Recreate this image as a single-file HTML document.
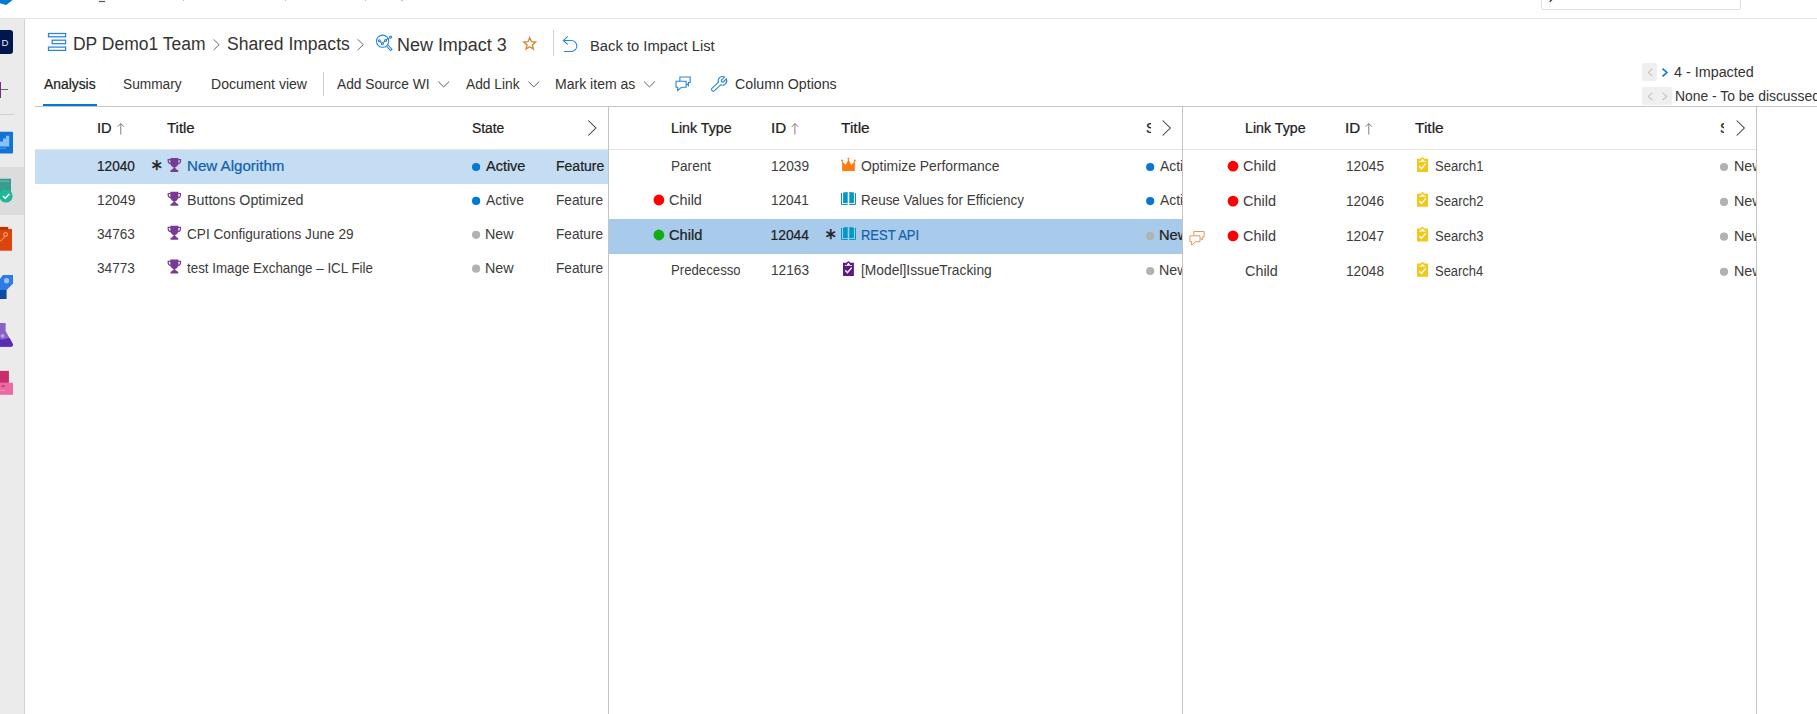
<!DOCTYPE html>
<html lang="en"><head><meta charset="utf-8"><title>Impact Analysis</title>
<style>
html,body{margin:0;padding:0;background:#fff}
body{width:1817px;height:714px;position:relative;overflow:hidden;font-family:"Liberation Sans",sans-serif}
.t{position:absolute;white-space:pre;line-height:1;font-family:"Liberation Sans",sans-serif;transform-origin:0 0}
.sb{-webkit-text-stroke:0.22px currentColor}
.clip{position:absolute;top:0;height:714px;overflow:hidden}
.a{position:absolute}
svg{position:absolute;overflow:visible}

</style></head>
<body>
<div class="a" style="left:0px;top:18px;width:1817px;height:1px;background:#e4e4e4;"></div>
<div class="a" style="left:1541px;top:-6px;width:198px;height:14px;border:1px solid #e0e0e0;border-radius:2px;background:#fff"></div>
<svg width="1817" height="12" style="left:0;top:0" viewBox="0 0 1817 12"><polygon points="0,0 12.6,0 6.2,5.1 0,3.3" fill="#0078d4"/><rect x="99" y="0.9" width="6.2" height="1.2" fill="#555"/><rect x="183" y="0" width="1" height="0.8" fill="#aaa"/><rect x="285" y="0" width="1" height="0.8" fill="#aaa"/><rect x="365" y="0" width="1" height="0.8" fill="#aaa"/><rect x="401.5" y="0" width="1" height="1.2" fill="#999"/><path d="M1549.6 1.9 L1552 -0.5" stroke="#333" stroke-width="1.3" fill="none"/></svg>
<div class="a" style="left:0px;top:19px;width:24px;height:695px;background:#ebebeb;"></div>
<div class="a" style="left:24px;top:19px;width:1px;height:695px;background:#d2d2d2;"></div>
<div class="a" style="left:0px;top:167px;width:24px;height:48px;background:#dcdcdc;"></div>
<div class="a" style="left:-6px;top:30px;width:19.3px;height:23.6px;background:#00164f;border-radius:3px"></div>
<span class="t" style="left:1.4px;top:37.6px;font-size:9.6px;color:#e8ecf5">D</span>
<div class="a" style="left:0px;top:89px;width:8.4px;height:1.4px;background:#6a6a6a;"></div>
<div class="a" style="left:0px;top:81.6px;width:1px;height:16px;background:#7a2b86;"></div>
<div class="a" style="left:0px;top:113.6px;width:14px;height:1px;background:#d0d0d0;"></div>
<svg width="24" height="714" style="left:0;top:0" viewBox="0 0 24 714"><rect x="-2" y="131.8" width="15" height="21.7" rx="1" fill="#1373d4"/><path d="M0 146.5 V141.5 H3 V138.5 H6 V135.8 H9.2 V146.5 Z" fill="#86c2f6"/><rect x="0" y="147.8" width="6" height="1" fill="#4f9be6"/><rect x="-2" y="178.7" width="13" height="14.8" fill="#3a9c8c"/><rect x="0" y="180.6" width="9" height="1" fill="#6fc3b3"/><circle cx="6" cy="196" r="6.6" fill="#1fb795"/><path d="M3 196 L5.3 198.4 L9.4 193.7" stroke="#fff" stroke-width="1.5" fill="none"/><rect x="-2" y="229" width="14" height="21.7" fill="#dc4409"/><rect x="-2" y="226.9" width="10.2" height="3" fill="#c13400"/><circle cx="5.6" cy="234.4" r="1.9" fill="none" stroke="#ffc9a8" stroke-width="0.9"/><path d="M4.6 236 C3.5 239 1.5 240.5 0 241" stroke="#ffb58a" stroke-width="0.9" fill="none"/><path d="M-1 280 L3 275 H13 V283.5 L6.6 290 H-1 Z" fill="#2f7be4"/><rect x="-1" y="290" width="7.6" height="9" fill="#0c4ba3"/><circle cx="6.6" cy="280.7" r="2.6" fill="#9dc0f3"/><path d="M-1 322.9 H5.6 V331 L12.8 344 C13.3 345.6 12.4 346.8 11 346.8 H-1 Z" fill="#8763c8"/><path d="M-1 339 C4 341 7 337.5 9.6 338.2 L12.8 344 C13.3 345.6 12.4 346.8 11 346.8 H-1 Z" fill="#5a2bb3"/><circle cx="2.6" cy="335.8" r="1.9" fill="#b9a3e3"/><rect x="-1" y="370.9" width="9.9" height="12" fill="#c92d6c"/><rect x="-1" y="382.8" width="14" height="12" fill="#ea6ba3"/><rect x="1.4" y="385.4" width="3.4" height="1.4" fill="#c92d6c"/><rect x="0" y="390" width="5" height="0.8" fill="#f5a3c7"/></svg>
<div class="a" style="left:35px;top:150px;width:573px;height:34px;background:#c4ddf3;"></div>
<div class="a" style="left:609px;top:219.2px;width:573.5px;height:34.6px;background:#a8cbec;"></div>
<div class="a" style="left:35px;top:149px;width:1721px;height:1px;background:#e6e4e2;"></div>
<div class="a" style="left:35px;top:106px;width:1782px;height:1px;background:#c6c6c6;"></div>
<div class="a" style="left:608px;top:106px;width:1px;height:608px;background:#c4c4c4;"></div>
<div class="a" style="left:1182px;top:106px;width:1px;height:608px;background:#c4c4c4;"></div>
<div class="a" style="left:1756px;top:106px;width:1px;height:608px;background:#c4c4c4;"></div>
<div class="a" style="left:43px;top:104px;width:54px;height:2.2px;background:#0078d4;"></div>
<div class="a" style="left:323px;top:72px;width:1px;height:24px;background:#cfcfcf;"></div>
<div class="a" style="left:553px;top:30px;width:1px;height:26px;background:#cfcfcf;"></div>
<div class="a" style="left:1642px;top:63px;width:15px;height:17.7px;background:#efefef;border-radius:2px"></div>
<div class="a" style="left:1642px;top:87.1px;width:29.7px;height:17.6px;background:#efefef;border-radius:2px"></div>
<svg width="1817" height="714" style="left:0;top:0" viewBox="0 0 1817 714"><rect x="48.5" y="33.5" width="17.1" height="3.3" fill="none" stroke="#2685d9" stroke-width="1.25"/>
<rect x="52.2" y="40.2" width="13.4" height="3.5" fill="none" stroke="#2685d9" stroke-width="1.25"/>
<rect x="48.5" y="47.1" width="17.1" height="3.3" fill="none" stroke="#2685d9" stroke-width="1.25"/>
<path d="M213.5 39.3 L219.2 44.7 L213.5 50.1" fill="none" stroke="#6b6967" stroke-width="1"/>
<path d="M357.6 39.3 L363.3 44.7 L357.6 50.1" fill="none" stroke="#6b6967" stroke-width="1"/>
<g fill="none" stroke="#2685d9" stroke-width="1.05"><circle cx="382.6" cy="41.2" r="6.1"/><path d="M386.6 46.3 L390.6 50.6 L392 49.3 L388 45" stroke-linejoin="round"/><circle cx="379.4" cy="40.8" r="1"/><circle cx="382.4" cy="43.7" r="1"/><circle cx="385.5" cy="40.4" r="1"/><circle cx="390.6" cy="37" r="1.1"/><path d="M380.1 41.5 L381.7 43 M383.1 43 L384.8 41.1 M386.3 39.8 L389.7 37.6"/></g>
<polygon points="529.70,37.60 531.35,41.63 535.69,41.95 532.36,44.77 533.40,49.00 529.70,46.70 526.00,49.00 527.04,44.77 523.71,41.95 528.05,41.63" fill="none" stroke="#d9832e" stroke-width="1.3" stroke-linejoin="miter"/>
<path d="M567.7 36.3 L563.4 40.4 L567.7 44.6 M563.6 40.4 H571.3 A5.55 5.55 0 0 1 571.3 51.5 H563.8" fill="none" stroke="#2685d9" stroke-width="1.05"/>
<path d="M438.3 81.6 L443.7 86.9 L449.1 81.6" fill="none" stroke="#605e5c" stroke-width="1"/>
<path d="M528.4 81.6 L533.8 86.9 L539.1999999999999 81.6" fill="none" stroke="#605e5c" stroke-width="1"/>
<path d="M644 81.6 L649.4 86.9 L654.8 81.6" fill="none" stroke="#605e5c" stroke-width="1"/>
<g transform="translate(0,0)" fill="none" stroke="#2685d9" stroke-width="1.1" stroke-linejoin="miter"><path d="M679.9 80.9 V77 H690.2 V82.5 H688.4 V85.6 L686.6 83.7"/><path d="M676 81.3 H686.1 V87.2 H681.6 L677.7 90.5 V87.2 H676 Z"/></g>
<g transform="translate(513.9,154.5)" fill="none" stroke="#d98646" stroke-width="0.85" stroke-linejoin="miter"><path d="M679.9 80.9 V77 H690.2 V82.5 H688.4 V85.6 L686.6 83.7"/><path d="M676 81.3 H686.1 V87.2 H681.6 L677.7 90.5 V87.2 H676 Z"/></g>
<path transform="translate(712.0,90.6) rotate(-43)" d="M1.7 -1.7 H10.35 A4.3 4.3 0 0 1 18.4 -1.3 L14.4 -1.3 A1.3 1.3 0 0 0 14.4 1.3 L18.4 1.3 A4.3 4.3 0 0 1 10.35 1.7 H1.7 A1.7 1.7 0 0 1 1.7 -1.7 Z" fill="none" stroke="#2685d9" stroke-width="1.1"/>
<path d="M1652.3 68.9 L1648.3 72.5 L1652.3 76.1" fill="none" stroke="#c2c2c2" stroke-width="1.1"/>
<path d="M1662.5 68.7 L1666.9 72.5 L1662.5 76.3" fill="none" stroke="#0078d4" stroke-width="1.6"/>
<path d="M1652.3 92.8 L1648.3 96.4 L1652.3 100" fill="none" stroke="#c2c2c2" stroke-width="1.1"/>
<path d="M1662.7 92.8 L1666.8 96.4 L1662.7 100" fill="none" stroke="#c2c2c2" stroke-width="1.1"/>
<path d="M588.3 120.5 L595.9 128 L588.3 135.5" fill="none" stroke="#3a3a3a" stroke-width="1.05"/>
<path d="M1162.7 120.5 L1170.3 128 L1162.7 135.5" fill="none" stroke="#3a3a3a" stroke-width="1.05"/>
<path d="M1736.7 120.5 L1744.3 128 L1736.7 135.5" fill="none" stroke="#3a3a3a" stroke-width="1.05"/>
<path d="M120.8 134.6 V123.6 M117.8 126.7 L120.8 123.5 L123.8 126.7" fill="none" stroke="#7a7876" stroke-width="0.95"/>
<path d="M794.9 134.6 V123.6 M791.9 126.7 L794.9 123.5 L797.9 126.7" fill="none" stroke="#7a7876" stroke-width="0.95"/>
<path d="M1368.8 134.6 V123.6 M1365.8 126.7 L1368.8 123.5 L1371.8 126.7" fill="none" stroke="#7a7876" stroke-width="0.95"/>
<circle cx="476.1" cy="167.0" r="4.1" fill="#0078d4"/>
<circle cx="476.1" cy="200.9" r="4.1" fill="#0078d4"/>
<circle cx="476.1" cy="234.8" r="4.1" fill="#b2b2b2"/>
<circle cx="476.1" cy="268.7" r="4.1" fill="#b2b2b2"/>
<circle cx="1150.2" cy="167.0" r="4.1" fill="#0078d4"/>
<circle cx="1150.2" cy="201.1" r="4.1" fill="#0078d4"/>
<circle cx="1150.2" cy="235.9" r="4.1" fill="#b2b2b2"/>
<circle cx="1150.2" cy="271.1" r="4.1" fill="#b2b2b2"/>
<circle cx="1724" cy="167.0" r="4.1" fill="#b2b2b2"/>
<circle cx="1724" cy="201.9" r="4.1" fill="#b2b2b2"/>
<circle cx="1724" cy="236.7" r="4.1" fill="#b2b2b2"/>
<circle cx="1724" cy="271.8" r="4.1" fill="#b2b2b2"/>
<circle cx="658.9" cy="200.0" r="5.4" fill="#ff0000"/>
<circle cx="658.9" cy="235.0" r="5.4" fill="#12ad10"/>
<circle cx="1233" cy="166.2" r="5.4" fill="#ff0000"/>
<circle cx="1233" cy="201.1" r="5.4" fill="#ff0000"/>
<circle cx="1233" cy="235.9" r="5.4" fill="#ff0000"/>
<g transform="translate(167.6,157.9)" fill="#773b93"><path d="M2.7 0 H10.8 V4.6 C10.8 7.4 9.2 8.9 7.6 9.4 L7.6 10.1 L9.6 12 H10.6 V14 H2.9 V12 H3.9 L5.9 10.1 V9.4 C4.3 8.9 2.7 7.4 2.7 4.6 Z"/><path d="M3 1.7 H0.6 V3.2 C0.6 4.9 1.9 5.8 3.3 6 M10.5 1.7 H12.9 V3.2 C12.9 4.9 11.6 5.8 10.2 6" fill="none" stroke="#773b93" stroke-width="1.2"/></g>
<g transform="translate(167.6,191.8)" fill="#773b93"><path d="M2.7 0 H10.8 V4.6 C10.8 7.4 9.2 8.9 7.6 9.4 L7.6 10.1 L9.6 12 H10.6 V14 H2.9 V12 H3.9 L5.9 10.1 V9.4 C4.3 8.9 2.7 7.4 2.7 4.6 Z"/><path d="M3 1.7 H0.6 V3.2 C0.6 4.9 1.9 5.8 3.3 6 M10.5 1.7 H12.9 V3.2 C12.9 4.9 11.6 5.8 10.2 6" fill="none" stroke="#773b93" stroke-width="1.2"/></g>
<g transform="translate(167.6,225.7)" fill="#773b93"><path d="M2.7 0 H10.8 V4.6 C10.8 7.4 9.2 8.9 7.6 9.4 L7.6 10.1 L9.6 12 H10.6 V14 H2.9 V12 H3.9 L5.9 10.1 V9.4 C4.3 8.9 2.7 7.4 2.7 4.6 Z"/><path d="M3 1.7 H0.6 V3.2 C0.6 4.9 1.9 5.8 3.3 6 M10.5 1.7 H12.9 V3.2 C12.9 4.9 11.6 5.8 10.2 6" fill="none" stroke="#773b93" stroke-width="1.2"/></g>
<g transform="translate(167.6,259.6)" fill="#773b93"><path d="M2.7 0 H10.8 V4.6 C10.8 7.4 9.2 8.9 7.6 9.4 L7.6 10.1 L9.6 12 H10.6 V14 H2.9 V12 H3.9 L5.9 10.1 V9.4 C4.3 8.9 2.7 7.4 2.7 4.6 Z"/><path d="M3 1.7 H0.6 V3.2 C0.6 4.9 1.9 5.8 3.3 6 M10.5 1.7 H12.9 V3.2 C12.9 4.9 11.6 5.8 10.2 6" fill="none" stroke="#773b93" stroke-width="1.2"/></g>
<g transform="translate(840.9,157.9)" fill="#ff7b0f"><path d="M1.2 13 V3.2 L4.7 7.2 L7.55 1.4 L10.4 7.2 L13.9 3.2 V13 Z"/><circle cx="1.2" cy="2.6" r="1"/><circle cx="7.55" cy="0.9" r="1"/><circle cx="13.9" cy="2.6" r="1"/></g>
<g transform="translate(841,192)"><path d="M2.1 0.4 L6.7 0 V11.2 L2.1 11 Z M12.9 0.4 L8.3 0 V11.2 L12.9 11 Z" fill="#0098c7"/><path d="M0.5 1 V12.5 H6.7 M8.3 12.5 H14.5 V1" fill="none" stroke="#0098c7" stroke-width="1"/></g>
<g transform="translate(841,227)"><path d="M2.1 0.4 L6.7 0 V11.2 L2.1 11 Z M12.9 0.4 L8.3 0 V11.2 L12.9 11 Z" fill="#0098c7"/><path d="M0.5 1 V12.5 H6.7 M8.3 12.5 H14.5 V1" fill="none" stroke="#0098c7" stroke-width="1"/></g>
<g transform="translate(843,260.9) scale(1.000,1)"><path d="M0 1.9 H3.3 L5.45 0 L7.6 1.9 H10.9 V15 H0 Z" fill="#5c1a82"/><path d="M1.9 4.9 H9 V4.2 L7.2 4 L5.45 1.7 L3.7 4 L1.9 4.2 Z" fill="#fff"/><path d="M2.3 9.3 L4.4 11.7 L8.7 6.7" fill="none" stroke="#fff" stroke-width="1.4"/></g>
<g transform="translate(1417,156.9) scale(1.009,1)"><path d="M0 1.9 H3.3 L5.45 0 L7.6 1.9 H10.9 V15 H0 Z" fill="#f2c718"/><path d="M1.9 4.9 H9 V4.2 L7.2 4 L5.45 1.7 L3.7 4 L1.9 4.2 Z" fill="#fff"/><path d="M2.3 9.3 L4.4 11.7 L8.7 6.7" fill="none" stroke="#fff" stroke-width="1.4"/></g>
<g transform="translate(1417,191.8) scale(1.009,1)"><path d="M0 1.9 H3.3 L5.45 0 L7.6 1.9 H10.9 V15 H0 Z" fill="#f2c718"/><path d="M1.9 4.9 H9 V4.2 L7.2 4 L5.45 1.7 L3.7 4 L1.9 4.2 Z" fill="#fff"/><path d="M2.3 9.3 L4.4 11.7 L8.7 6.7" fill="none" stroke="#fff" stroke-width="1.4"/></g>
<g transform="translate(1417,226.6) scale(1.009,1)"><path d="M0 1.9 H3.3 L5.45 0 L7.6 1.9 H10.9 V15 H0 Z" fill="#f2c718"/><path d="M1.9 4.9 H9 V4.2 L7.2 4 L5.45 1.7 L3.7 4 L1.9 4.2 Z" fill="#fff"/><path d="M2.3 9.3 L4.4 11.7 L8.7 6.7" fill="none" stroke="#fff" stroke-width="1.4"/></g>
<g transform="translate(1417,261.7) scale(1.009,1)"><path d="M0 1.9 H3.3 L5.45 0 L7.6 1.9 H10.9 V15 H0 Z" fill="#f2c718"/><path d="M1.9 4.9 H9 V4.2 L7.2 4 L5.45 1.7 L3.7 4 L1.9 4.2 Z" fill="#fff"/><path d="M2.3 9.3 L4.4 11.7 L8.7 6.7" fill="none" stroke="#fff" stroke-width="1.4"/></g></svg>
<span class="t" style="left:150.25px;top:158.0px;font-size:15.5px;color:#222;-webkit-text-stroke:0.35px #222;font-family:'DejaVu Sans',sans-serif">∗</span>
<span class="t" style="left:824.35px;top:226.9px;font-size:15.5px;color:#222;-webkit-text-stroke:0.35px #222;font-family:'DejaVu Sans',sans-serif">∗</span>
<span class="t" style="left:72.64px;top:34.90px;font-size:18px;color:#343332;transform:scaleX(0.9712)">DP Demo1 Team</span><span class="t" style="left:226.97px;top:34.60px;font-size:18px;color:#343332;transform:scaleX(0.9739)">Shared Impacts</span><span class="t" style="left:397.30px;top:36.00px;font-size:18px;color:#343332;transform:scaleX(0.9968)">New Impact 3</span><span class="t" style="left:589.74px;top:39.00px;font-size:14.7px;color:#343332;transform:scaleX(1.0045)">Back to Impact List</span><span class="t sb" style="left:44.10px;top:78.00px;font-size:13.8px;color:#222120;transform:scaleX(1.0039)">Analysis</span><span class="t" style="left:122.66px;top:78.00px;font-size:13.8px;color:#343332;transform:scaleX(0.9923)">Summary</span><span class="t" style="left:210.68px;top:78.00px;font-size:13.8px;color:#343332;transform:scaleX(1.0177)">Document view</span><span class="t" style="left:337.40px;top:78.00px;font-size:13.8px;color:#343332;transform:scaleX(0.9967)">Add Source WI</span><span class="t" style="left:465.60px;top:78.00px;font-size:13.8px;color:#343332;transform:scaleX(0.9972)">Add Link</span><span class="t" style="left:555.18px;top:78.00px;font-size:13.8px;color:#343332;transform:scaleX(1.0181)">Mark item as</span><span class="t" style="left:734.83px;top:78.00px;font-size:13.8px;color:#343332;transform:scaleX(1.0281)">Column Options</span><span class="t" style="left:1673.74px;top:65.80px;font-size:13.8px;color:#343332;transform:scaleX(1.0397)">4 - Impacted</span><span class="t" style="left:1674.59px;top:89.60px;font-size:13.8px;color:#343332;transform:scaleX(1.0070)">None - To be discussed</span>
<div class="clip" style="left:35px;width:573px"><span class="t sb" style="left:61.88px;top:122.00px;font-size:13.8px;color:#222120;transform:scaleX(1.0583)">ID</span><span class="t sb" style="left:132.03px;top:122.00px;font-size:13.8px;color:#222120;transform:scaleX(1.0828)">Title</span><span class="t sb" style="left:436.80px;top:122.00px;font-size:13.8px;color:#222120;transform:scaleX(1.0016)">State</span><span class="t sb" style="left:62.01px;top:159.90px;font-size:13.8px;color:#222120;transform:scaleX(0.9865)">12040</span><span class="t" style="left:62.00px;top:193.80px;font-size:13.8px;color:#3d3c3b;transform:scaleX(1.0014)">12049</span><span class="t" style="left:61.91px;top:227.70px;font-size:13.8px;color:#3d3c3b;transform:scaleX(0.9879)">34763</span><span class="t" style="left:61.91px;top:261.60px;font-size:13.8px;color:#3d3c3b;transform:scaleX(0.9879)">34773</span><span class="t sb" style="left:151.81px;top:159.90px;font-size:13.8px;color:#0f62ac;transform:scaleX(1.0946)">New Algorithm</span><span class="t" style="left:151.87px;top:193.80px;font-size:13.8px;color:#3d3c3b;transform:scaleX(1.0339)">Buttons Optimized</span><span class="t" style="left:151.66px;top:227.70px;font-size:13.8px;color:#3d3c3b;transform:scaleX(0.9871)">CPI Configurations June 29</span><span class="t" style="left:152.36px;top:261.60px;font-size:13.8px;color:#3d3c3b;transform:scaleX(0.9686)">test Image Exchange – ICL File</span><span class="t sb" style="left:451.20px;top:159.90px;font-size:13.8px;color:#222120;transform:scaleX(1.0486)">Active</span><span class="t" style="left:451.20px;top:193.80px;font-size:13.8px;color:#3d3c3b;transform:scaleX(1.0081)">Active</span><span class="t" style="left:450.46px;top:227.70px;font-size:13.8px;color:#3d3c3b;transform:scaleX(1.0377)">New</span><span class="t" style="left:450.46px;top:261.60px;font-size:13.8px;color:#3d3c3b;transform:scaleX(1.0377)">New</span><span class="t sb" style="left:521.38px;top:159.90px;font-size:13.8px;color:#222120;transform:scaleX(1.0152)">Feature</span><span class="t" style="left:521.41px;top:193.80px;font-size:13.8px;color:#3d3c3b;transform:scaleX(0.9891)">Feature</span><span class="t" style="left:521.41px;top:227.70px;font-size:13.8px;color:#3d3c3b;transform:scaleX(0.9891)">Feature</span><span class="t" style="left:521.41px;top:261.60px;font-size:13.8px;color:#3d3c3b;transform:scaleX(0.9891)">Feature</span></div>
<div class="clip" style="left:609px;width:573px"><span class="t sb" style="left:61.67px;top:122.00px;font-size:13.8px;color:#222120;transform:scaleX(1.0306)">Link Type</span><span class="t sb" style="left:161.83px;top:122.00px;font-size:13.8px;color:#222120;transform:scaleX(1.1000)">ID</span><span class="t sb" style="left:231.92px;top:122.00px;font-size:13.8px;color:#222120;transform:scaleX(1.1232)">Title</span><span class="t" style="left:61.62px;top:159.90px;font-size:13.8px;color:#3d3c3b;transform:scaleX(0.9848)">Parent</span><span class="t" style="left:59.52px;top:194.00px;font-size:13.8px;color:#3d3c3b;transform:scaleX(1.0454)">Child</span><span class="t sb" style="left:59.77px;top:228.80px;font-size:13.8px;color:#222120;transform:scaleX(1.0579)">Child</span><span class="t" style="left:162.41px;top:159.90px;font-size:13.8px;color:#3d3c3b;transform:scaleX(0.9932)">12039</span><span class="t" style="left:162.41px;top:194.00px;font-size:13.8px;color:#3d3c3b;transform:scaleX(0.9850)">12041</span><span class="t sb" style="left:161.60px;top:228.80px;font-size:13.8px;color:#222120;transform:scaleX(1.0000)">12044</span><span class="t" style="left:162.41px;top:264.00px;font-size:13.8px;color:#3d3c3b;transform:scaleX(0.9932)">12163</span><span class="t" style="left:251.84px;top:159.90px;font-size:13.8px;color:#3d3c3b;transform:scaleX(1.0092)">Optimize Performance</span><span class="t" style="left:251.63px;top:194.00px;font-size:13.8px;color:#3d3c3b;transform:scaleX(0.9732)">Reuse Values for Efficiency</span><span class="t sb" style="left:251.66px;top:228.80px;font-size:13.8px;color:#0f62ac;transform:scaleX(0.9389)">REST API</span><span class="t" style="left:252.00px;top:264.00px;font-size:13.8px;color:#3d3c3b;transform:scaleX(1.0012)">[Model]IssueTracking</span><span class="t" style="left:551.20px;top:159.90px;font-size:13.8px;color:#3d3c3b;transform:scaleX(1.0081)">Active</span><span class="t" style="left:551.20px;top:194.00px;font-size:13.8px;color:#3d3c3b;transform:scaleX(1.0081)">Active</span><span class="t sb" style="left:550.43px;top:228.80px;font-size:13.8px;color:#222120;transform:scaleX(1.0654)">New</span><span class="t" style="left:550.46px;top:264.00px;font-size:13.8px;color:#3d3c3b;transform:scaleX(1.0377)">New</span></div>
<div class="clip" style="left:1140px;width:10.700000000000045px"><span class="t sb" style="left:6.20px;top:122.00px;font-size:13.8px;color:#222120;transform:scaleX(1.0016)">State</span></div>
<div class="clip" style="left:660px;width:79.60000000000002px"><span class="t" style="left:10.64px;top:264.00px;font-size:13.8px;color:#3d3c3b;transform:scaleX(0.9561)">Predecessor</span></div>
<div class="clip" style="left:1183px;width:573px"><span class="t sb" style="left:61.67px;top:122.00px;font-size:13.8px;color:#222120;transform:scaleX(1.0306)">Link Type</span><span class="t sb" style="left:161.82px;top:122.00px;font-size:13.8px;color:#222120;transform:scaleX(1.1000)">ID</span><span class="t sb" style="left:232.12px;top:122.00px;font-size:13.8px;color:#222120;transform:scaleX(1.1232)">Title</span><span class="t" style="left:59.51px;top:159.90px;font-size:13.8px;color:#3d3c3b;transform:scaleX(1.0487)">Child</span><span class="t" style="left:59.51px;top:194.80px;font-size:13.8px;color:#3d3c3b;transform:scaleX(1.0487)">Child</span><span class="t" style="left:59.51px;top:229.60px;font-size:13.8px;color:#3d3c3b;transform:scaleX(1.0487)">Child</span><span class="t" style="left:61.92px;top:264.70px;font-size:13.8px;color:#3d3c3b;transform:scaleX(1.0420)">Child</span><span class="t" style="left:162.61px;top:159.90px;font-size:13.8px;color:#3d3c3b;transform:scaleX(0.9905)">12045</span><span class="t" style="left:162.61px;top:194.80px;font-size:13.8px;color:#3d3c3b;transform:scaleX(0.9905)">12046</span><span class="t" style="left:162.61px;top:229.60px;font-size:13.8px;color:#3d3c3b;transform:scaleX(0.9905)">12047</span><span class="t" style="left:162.61px;top:264.70px;font-size:13.8px;color:#3d3c3b;transform:scaleX(0.9905)">12048</span><span class="t" style="left:251.79px;top:159.90px;font-size:13.8px;color:#3d3c3b;transform:scaleX(0.9440)">Search1</span><span class="t" style="left:550.76px;top:159.90px;font-size:13.8px;color:#3d3c3b;transform:scaleX(1.0377)">New</span><span class="t" style="left:251.79px;top:194.80px;font-size:13.8px;color:#3d3c3b;transform:scaleX(0.9440)">Search2</span><span class="t" style="left:550.76px;top:194.80px;font-size:13.8px;color:#3d3c3b;transform:scaleX(1.0377)">New</span><span class="t" style="left:251.79px;top:229.60px;font-size:13.8px;color:#3d3c3b;transform:scaleX(0.9440)">Search3</span><span class="t" style="left:550.76px;top:229.60px;font-size:13.8px;color:#3d3c3b;transform:scaleX(1.0377)">New</span><span class="t" style="left:251.80px;top:264.70px;font-size:13.8px;color:#3d3c3b;transform:scaleX(0.9393)">Search4</span><span class="t" style="left:550.76px;top:264.70px;font-size:13.8px;color:#3d3c3b;transform:scaleX(1.0377)">New</span></div>
<div class="clip" style="left:1715px;width:9.299999999999955px"><span class="t sb" style="left:5.20px;top:122.00px;font-size:13.8px;color:#222120;transform:scaleX(1.0016)">State</span></div>

</body></html>
